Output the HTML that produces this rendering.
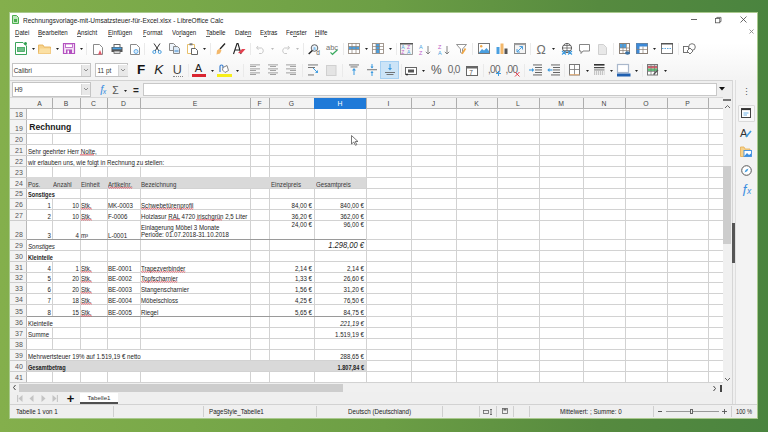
<!DOCTYPE html><html><head><meta charset="utf-8"><style>
html,body{margin:0;padding:0;}
body{width:768px;height:432px;overflow:hidden;position:relative;font-family:"Liberation Sans", sans-serif;
background:linear-gradient(90deg,#84af4c 0%,#78a849 25%,#6c9e45 50%,#568a3f 78%,#4a843f 100%);}
div{position:absolute;box-sizing:border-box;}
.t{white-space:pre;line-height:1;color:#333;}
svg{position:absolute;overflow:visible;}
</style></head><body><div style="left:9px;top:12px;width:749px;height:407px;background:#a9c98e;"></div><div style="left:10px;top:13px;width:747px;height:405px;background:linear-gradient(#ffffff 0px,#ffffff 30px,#f4f4f4 66px,#efefef 100%);"></div><svg style="left:12px;top:15px" width="7" height="9" viewBox="0 0 7 9"><path d="M0.5 0.5H4.5L6.5 2.5V8.5H0.5Z" fill="#bfe6bf" stroke="#4caf50" stroke-width="1"/><rect x="2" y="4" width="3" height="3" fill="#4caf50"/></svg><div class="t" style="left:22.6px;top:16.77px;font-size:7px;color:#222;transform:scaleX(0.93);transform-origin:0 0;">Rechnungsvorlage-mit-Umsatzsteuer-für-Excel.xlsx - LibreOffice Calc</div><div style="left:690.5px;top:19px;width:6.5px;height:0.8px;background:#666;"></div><svg style="left:715px;top:16.5px" width="7" height="6" viewBox="0 0 7 6"><rect x="0.4" y="1.4" width="4.4" height="4.4" fill="none" stroke="#555" stroke-width="0.8"/><path d="M1.8 1.4V0.4H6V4.6H4.8" fill="none" stroke="#555" stroke-width="0.8"/></svg><svg style="left:740px;top:16px" width="7" height="7" viewBox="0 0 7 7"><path d="M0.5 0.5L6.5 6.5M6.5 0.5L0.5 6.5" stroke="#444" stroke-width="0.8"/></svg><svg style="left:749px;top:29px" width="5" height="5" viewBox="0 0 5 5"><path d="M0.5 0.5L4.5 4.5M4.5 0.5L0.5 4.5" stroke="#888" stroke-width="0.9"/></svg><div class="t" style="left:15px;top:29.74px;font-size:6.7px;color:#1a1a1a;transform:scaleX(0.92);transform-origin:0 0;">Datei</div><div class="t" style="left:37.5px;top:29.74px;font-size:6.7px;color:#1a1a1a;transform:scaleX(0.92);transform-origin:0 0;">Bearbeiten</div><div class="t" style="left:77px;top:29.74px;font-size:6.7px;color:#1a1a1a;transform:scaleX(0.92);transform-origin:0 0;">Ansicht</div><div class="t" style="left:108px;top:29.74px;font-size:6.7px;color:#1a1a1a;transform:scaleX(0.92);transform-origin:0 0;">Einfügen</div><div class="t" style="left:142.5px;top:29.74px;font-size:6.7px;color:#1a1a1a;transform:scaleX(0.92);transform-origin:0 0;">Format</div><div class="t" style="left:171.5px;top:29.74px;font-size:6.7px;color:#1a1a1a;transform:scaleX(0.92);transform-origin:0 0;">Vorlagen</div><div class="t" style="left:206px;top:29.74px;font-size:6.7px;color:#1a1a1a;transform:scaleX(0.92);transform-origin:0 0;">Tabelle</div><div class="t" style="left:234.5px;top:29.74px;font-size:6.7px;color:#1a1a1a;transform:scaleX(0.92);transform-origin:0 0;">Daten</div><div class="t" style="left:260px;top:29.74px;font-size:6.7px;color:#1a1a1a;transform:scaleX(0.92);transform-origin:0 0;">Extras</div><div class="t" style="left:286px;top:29.74px;font-size:6.7px;color:#1a1a1a;transform:scaleX(0.92);transform-origin:0 0;">Fenster</div><div class="t" style="left:315px;top:29.74px;font-size:6.7px;color:#1a1a1a;transform:scaleX(0.92);transform-origin:0 0;">Hilfe</div><div style="left:15.0px;top:36.2px;width:4.416px;height:0.6px;background:#666;"></div><div style="left:37.5px;top:36.2px;width:4.140000000000001px;height:0.6px;background:#666;"></div><div style="left:77.0px;top:36.2px;width:4.140000000000001px;height:0.6px;background:#666;"></div><div style="left:108.0px;top:36.2px;width:4.140000000000001px;height:0.6px;background:#666;"></div><div style="left:142.5px;top:36.2px;width:3.772px;height:0.6px;background:#666;"></div><div style="left:178.676px;top:36.2px;width:2.0240000000000005px;height:0.6px;background:#666;"></div><div style="left:206.0px;top:36.2px;width:3.772px;height:0.6px;background:#666;"></div><div style="left:247.472px;top:36.2px;width:3.4040000000000004px;height:0.6px;background:#666;"></div><div style="left:264.14px;top:36.2px;width:3.036px;height:0.6px;background:#666;"></div><div style="left:293.176px;top:36.2px;width:3.4040000000000004px;height:0.6px;background:#666;"></div><div style="left:315.0px;top:36.2px;width:4.416px;height:0.6px;background:#666;"></div><svg style="left:15px;top:42px" width="12" height="13" viewBox="0 0 12 13"><path d="M0.5 0.5H8L11.5 4V12.5H0.5Z" fill="#fff" stroke="#3aa35a"/><rect x="2.5" y="5.5" width="7" height="4" fill="#6fc187" stroke="#3aa35a" stroke-width="0.8"/><circle cx="10.5" cy="1.5" r="1.5" fill="#2e9e4e"/></svg><svg style="left:31.5px;top:48px" width="3" height="2" viewBox="0 0 3 2"><path d="M0 0H3L1.5 2Z" fill="#222"/></svg><svg style="left:38px;top:44px" width="13" height="10" viewBox="0 0 13 10"><path d="M0.5 1V9.5H12.5V3H6L5 1Z" fill="#f6d28b" stroke="#e8b35b" stroke-width="0.9"/><path d="M0.5 9.5L2 4.5H12.5V9.5Z" fill="#fbe0a4"/></svg><svg style="left:55.5px;top:48px" width="3" height="2" viewBox="0 0 3 2"><path d="M0 0H3L1.5 2Z" fill="#222"/></svg><svg style="left:62.5px;top:43px" width="12" height="11" viewBox="0 0 12 11"><path d="M0.5 0.5H11.5V10.5H0.5Z" fill="#f5e4f7" stroke="#b452c0" stroke-width="1.2"/><rect x="2.5" y="1" width="7" height="3.5" fill="#fff" stroke="#b452c0" stroke-width="0.8"/><rect x="3" y="6.5" width="6" height="4" fill="#b452c0"/><rect x="4.5" y="7.5" width="1.5" height="3" fill="#fff"/></svg><svg style="left:79.5px;top:48px" width="3" height="2" viewBox="0 0 3 2"><path d="M0 0H3L1.5 2Z" fill="#222"/></svg><div style="left:86px;top:43px;width:1px;height:12px;background:#eaeaea;"></div><svg style="left:93px;top:44px" width="10" height="11" viewBox="0 0 10 11"><path d="M0.5 0.5H6.5L9.5 3.5V10.5H0.5Z" fill="#fff" stroke="#8a8a8a"/><path d="M5 10.5L7 6L9 10.5Z" fill="#e35b6b"/></svg><svg style="left:110.5px;top:44px" width="12" height="10" viewBox="0 0 12 10"><rect x="3" y="0.5" width="6" height="3" fill="#fff" stroke="#666"/><rect x="0.5" y="3" width="11" height="5" fill="#555"/><rect x="1.5" y="3.5" width="9" height="1.8" fill="#4a9fe0"/><rect x="3" y="7" width="6" height="2.5" fill="#ddd" stroke="#666" stroke-width="0.8"/></svg><svg style="left:130px;top:44px" width="10" height="11" viewBox="0 0 10 11"><path d="M0.5 0.5H6.5L9.5 3.5V10.5H0.5Z" fill="#fff" stroke="#8a8a8a"/><circle cx="6" cy="7.5" r="2" fill="#d8ebfa" stroke="#5aa6e6" stroke-width="0.9"/></svg><div style="left:144px;top:43px;width:1px;height:12px;background:#eaeaea;"></div><svg style="left:152px;top:43px" width="10" height="11" viewBox="0 0 10 11"><path d="M2 0.5L7 8M8 0.5L3 8" stroke="#333" stroke-width="1"/><circle cx="2.3" cy="9" r="1.5" fill="none" stroke="#4a9fe0" stroke-width="1"/><circle cx="7.7" cy="9" r="1.5" fill="none" stroke="#4a9fe0" stroke-width="1"/></svg><svg style="left:169px;top:43px" width="12" height="11" viewBox="0 0 12 11"><path d="M0.5 0.5H4.5L6.5 2.5V7.5H0.5Z" fill="#eef5fc" stroke="#888"/><path d="M4.5 3.5H8.5L10.5 5.5V10.5H4.5Z" fill="#dbeaf8" stroke="#888"/><rect x="5.5" y="7" width="4" height="2" fill="#8ab8e2"/></svg><svg style="left:187px;top:43px" width="12" height="12" viewBox="0 0 12 12"><path d="M0.5 1.5H7.5V10.5H0.5Z" fill="#fff" stroke="#e8c06a" stroke-width="1"/><rect x="2.5" y="0.3" width="3" height="2" fill="#777"/><path d="M4.5 5.5H8.5L10.5 7.5V11.5H4.5Z" fill="#fff" stroke="#666"/></svg><svg style="left:202.5px;top:48px" width="3" height="2" viewBox="0 0 3 2"><path d="M0 0H3L1.5 2Z" fill="#222"/></svg><div style="left:210px;top:43px;width:1px;height:12px;background:#eaeaea;"></div><svg style="left:216px;top:43px" width="10" height="12" viewBox="0 0 10 12"><path d="M9 0.5L4 6" stroke="#222" stroke-width="1.3"/><path d="M0.5 11.5L1 7.5L3.5 5.5L5.5 7.5L4 10.5Z" fill="#f3b86b"/></svg><svg style="left:233px;top:43px" width="13" height="12" viewBox="0 0 13 12"><path d="M0.5 11L4 0.5H5L8 11M2 7H6.5" fill="none" stroke="#222" stroke-width="1.1"/><path d="M5 10L9 6H12.5L8.5 10.5Z" fill="#e4404f"/></svg><div style="left:250px;top:43px;width:1px;height:12px;background:#eaeaea;"></div><svg style="left:255.5px;top:45px" width="9" height="9" viewBox="0 0 9 9"><path d="M2 1L0.5 3L2.5 4.5M0.8 3H5.5A3 3 0 0 1 5.5 8.5H3" fill="none" stroke="#c8c8c8" stroke-width="1"/></svg><svg style="left:271.0px;top:48px" width="3" height="2" viewBox="0 0 3 2"><path d="M0 0H3L1.5 2Z" fill="#bbb"/></svg><svg style="left:279.5px;top:45px" width="10" height="9" viewBox="0 0 10 9"><path d="M8 1L9.5 3L7.5 4.5M9.2 3H4.5A3 3 0 0 0 4.5 8.5H7" fill="none" stroke="#c8c8c8" stroke-width="1"/></svg><svg style="left:295.5px;top:48px" width="3" height="2" viewBox="0 0 3 2"><path d="M0 0H3L1.5 2Z" fill="#bbb"/></svg><div style="left:302.5px;top:43px;width:1px;height:12px;background:#eaeaea;"></div><svg style="left:308px;top:43.5px" width="13" height="11" viewBox="0 0 13 11"><circle cx="6.5" cy="4" r="3.3" fill="#eaf3fb" stroke="#555" stroke-width="0.9"/><path d="M4.3 6.5L0.7 10" stroke="#222" stroke-width="1.4"/><text x="5" y="5.5" font-size="4.5" fill="#4a9fe0" font-family="Liberation Sans">a</text><text x="8.3" y="11" font-size="6.5" fill="#555" font-family="Liberation Sans">d</text></svg><svg style="left:326px;top:43.5px" width="13" height="11" viewBox="0 0 13 11"><text x="0" y="6" font-size="7.2" fill="#707070" font-family="Liberation Sans" textLength="12" lengthAdjust="spacingAndGlyphs">abc</text><path d="M4.5 8.3L6.5 10.3L11.5 5.8" fill="none" stroke="#3aaa60" stroke-width="1.2"/></svg><div style="left:342.5px;top:43px;width:1px;height:12px;background:#eaeaea;"></div><svg style="left:348px;top:43px" width="12" height="11" viewBox="0 0 12 11"><rect x="0.5" y="0.5" width="11" height="10" fill="#fff" stroke="#9a8f85" stroke-width="0.9"/><rect x="1" y="3.5" width="10" height="3" fill="#4a9fe0"/><path d="M0.5 3.5H11.5M0.5 6.5H11.5M4 0.5V10.5M8 0.5V10.5" stroke="#8a7f75" stroke-width="0.7"/></svg><svg style="left:364.5px;top:48px" width="3" height="2" viewBox="0 0 3 2"><path d="M0 0H3L1.5 2Z" fill="#222"/></svg><svg style="left:372px;top:43px" width="12" height="11" viewBox="0 0 12 11"><rect x="0.5" y="0.5" width="11" height="10" fill="#fff" stroke="#9a8f85" stroke-width="0.9"/><rect x="4" y="1" width="3.5" height="9" fill="#4a9fe0"/><path d="M0.5 3.5H11.5M0.5 6.5H11.5M4 0.5V10.5M7.5 0.5V10.5" stroke="#8a7f75" stroke-width="0.7"/></svg><svg style="left:388.5px;top:48px" width="3" height="2" viewBox="0 0 3 2"><path d="M0 0H3L1.5 2Z" fill="#222"/></svg><div style="left:395.5px;top:43px;width:1px;height:12px;background:#eaeaea;"></div><svg style="left:400px;top:43px" width="13" height="12" viewBox="0 0 13 12"><rect x="0.5" y="1" width="12" height="10.5" fill="#f4f4f4" stroke="#888" stroke-width="0.8"/><rect x="0" y="0" width="13" height="1.3" fill="#555"/><text x="1.3" y="6" font-size="5" fill="#4a9fe0" font-family="Liberation Sans">A</text><text x="1.3" y="11" font-size="5" fill="#c05ec8" font-family="Liberation Sans">Z</text><text x="7" y="6" font-size="5" fill="#c05ec8" font-family="Liberation Sans">Z</text><text x="7" y="11" font-size="5" fill="#4a9fe0" font-family="Liberation Sans">A</text></svg><svg style="left:419px;top:43px" width="13" height="12" viewBox="0 0 13 12"><text x="0" y="5.5" font-size="5.5" fill="#4a9fe0" font-family="Liberation Sans">A</text><text x="0" y="11.5" font-size="5.5" fill="#c05ec8" font-family="Liberation Sans">Z</text><path d="M9 3V11M6.8 8.8L9 11L11.2 8.8" fill="none" stroke="#777" stroke-width="0.9"/></svg><svg style="left:437.5px;top:43px" width="13" height="12" viewBox="0 0 13 12"><text x="0" y="5.5" font-size="5.5" fill="#c05ec8" font-family="Liberation Sans">Z</text><text x="0" y="11.5" font-size="5.5" fill="#4a9fe0" font-family="Liberation Sans">A</text><path d="M9 3V11M6.8 8.8L9 11L11.2 8.8" fill="none" stroke="#777" stroke-width="0.9"/></svg><svg style="left:456px;top:43.5px" width="11" height="10" viewBox="0 0 11 10"><path d="M0.5 0.5H10.5L6.5 5V9.5L4.5 8.5V5Z" fill="#fff" stroke="#888" stroke-width="0.9"/><path d="M6 9.8L9.5 4.5" stroke="#f0a848" stroke-width="1.8"/></svg><div style="left:472px;top:43px;width:1px;height:12px;background:#eaeaea;"></div><svg style="left:478px;top:43px" width="12" height="11" viewBox="0 0 12 11"><rect x="0.5" y="0.5" width="11" height="10" fill="#fff" stroke="#777"/><circle cx="3.2" cy="3.2" r="1.2" fill="#f0a848"/><path d="M1 9.5L4 6L6 7.5L8.5 5L11 8V10H1Z" fill="#4a9fe0"/></svg><svg style="left:495.5px;top:43px" width="12" height="11" viewBox="0 0 12 11"><rect x="0.5" y="4" width="3" height="7" fill="#4a9fe0"/><rect x="4.5" y="0.5" width="3" height="10.5" fill="#f3b86b"/><rect x="8.5" y="5.5" width="3" height="5.5" fill="#555"/></svg><svg style="left:514px;top:43px" width="12" height="11" viewBox="0 0 12 11"><rect x="0.5" y="0.5" width="11" height="10" fill="#f4f4f4" stroke="#8c8c8c"/><rect x="0.5" y="0.5" width="11" height="1.6" fill="#a0a0a0"/><path d="M3 9L8.5 3.5M3 6V9H6M8.5 6.5V3.5H5.5" fill="none" stroke="#4a9fe0" stroke-width="1"/></svg><div style="left:530px;top:43px;width:1px;height:12px;background:#eaeaea;"></div><div class="t" style="left:531.2px;top:42.53px;width:20px;text-align:center;font-size:13px;transform:scaleX(0.95);transform-origin:50% 0;color:#707070;">Ω</div><svg style="left:552.0px;top:48px" width="3" height="2" viewBox="0 0 3 2"><path d="M0 0H3L1.5 2Z" fill="#222"/></svg><svg style="left:561px;top:43px" width="12" height="12" viewBox="0 0 12 12"><circle cx="6" cy="5" r="4.5" fill="#fff" stroke="#555" stroke-width="1"/><path d="M1.5 5H10.5M6 0.5V9.5M3 2.5H9M3 7.5H9" stroke="#555" stroke-width="0.7"/><path d="M1 8L5 11.5M11 8L7 11.5M1 11.5L5 8M11 11.5L7 8" stroke="#3a9ae0" stroke-width="1.1"/></svg><svg style="left:579px;top:43.5px" width="11" height="10" viewBox="0 0 11 10"><path d="M0.5 0.5H10.5V7H4L2 9.5V7H0.5Z" fill="#fff" stroke="#777" stroke-width="0.9"/></svg><svg style="left:598px;top:43.5px" width="9" height="11" viewBox="0 0 9 11"><path d="M0.5 0.5H5.5L8.5 3.5V10.5H0.5Z" fill="#e8e8e8" stroke="#d0d0d0"/></svg><div style="left:613px;top:43px;width:1px;height:12px;background:#eaeaea;"></div><svg style="left:619px;top:43px" width="12" height="12" viewBox="0 0 12 12"><rect x="0.5" y="0.5" width="10" height="10" fill="#fff" stroke="#8a7f75"/><rect x="1" y="1" width="6" height="4" fill="#4a9fe0"/><path d="M0.5 5H10.5M4 0.5V10.5M7.5 0.5V10.5M0.5 7.5H10.5" stroke="#8a7f75" stroke-width="0.7"/><ellipse cx="8.5" cy="10" rx="2.5" ry="1.8" fill="#3a6fa0"/></svg><svg style="left:636px;top:43px" width="12" height="11" viewBox="0 0 12 11"><rect x="0.5" y="0.5" width="11" height="10" fill="#fff" stroke="#8a7f75"/><rect x="0.5" y="0.5" width="11" height="3" fill="#3d8ad8"/><rect x="0.5" y="0.5" width="3" height="10" fill="#3d8ad8"/><path d="M0.5 6.5H11.5M7 3.5V10.5" stroke="#8a7f75" stroke-width="0.7"/></svg><svg style="left:652.5px;top:48px" width="3" height="2" viewBox="0 0 3 2"><path d="M0 0H3L1.5 2Z" fill="#222"/></svg><svg style="left:661px;top:43px" width="12" height="11" viewBox="0 0 12 11"><rect x="0.5" y="0.5" width="11" height="10" fill="#fff" stroke="#777"/><rect x="0" y="0" width="12" height="1.5" fill="#555"/><path d="M1 5.5H11" stroke="#4a9fe0" stroke-width="0.9" stroke-dasharray="1.5 1"/></svg><div style="left:678px;top:43px;width:1px;height:12px;background:#eaeaea;"></div><svg style="left:683px;top:42.5px" width="13" height="11" viewBox="0 0 13 11"><rect x="0.5" y="3.5" width="5" height="6" fill="#fff" stroke="#666" stroke-width="0.9"/><circle cx="9" cy="4" r="3.3" fill="#fff" stroke="#666" stroke-width="0.9"/><path d="M7 5L10 8L7 11L4 8Z" fill="#fff" stroke="#666" stroke-width="0.9"/></svg><div style="left:12px;top:63px;width:79px;height:14px;background:#fff;border:1px solid #c4c4c4;"></div><div style="left:81px;top:64.5px;width:9px;height:11.5px;background:#e8e8e8;border-left:1px solid #d4d4d4;"></div><svg style="left:83.5px;top:69px" width="4" height="3" viewBox="0 0 4 3"><path d="M0 0L2 2L4 0" fill="none" stroke="#777" stroke-width="0.8"/></svg><div class="t" style="left:13.75px;top:67.81px;font-size:6.4px;color:#333;">Calibri</div><div style="left:95px;top:63px;width:33px;height:14px;background:#fff;border:1px solid #c4c4c4;"></div><div style="left:118px;top:64.5px;width:9.5px;height:11.5px;background:#e8e8e8;border-left:1px solid #d4d4d4;"></div><svg style="left:121px;top:69px" width="4" height="3" viewBox="0 0 4 3"><path d="M0 0L2 2L4 0" fill="none" stroke="#777" stroke-width="0.8"/></svg><div class="t" style="left:97.5px;top:67.81px;font-size:6.4px;color:#333;">11 pt</div><div class="t" style="left:131.0px;top:63.38px;width:20px;text-align:center;font-size:13.5px;color:#111;font-weight:bold;">F</div><div class="t" style="left:148.8px;top:63.38px;width:20px;text-align:center;font-size:13.5px;color:#222;font-style:italic;">K</div><div class="t" style="left:167.3px;top:63.69px;width:20px;text-align:center;font-size:12.5px;color:#444;">U</div><div style="left:172.5px;top:75.5px;width:10px;height:1px;border-top:1px dotted #888;"></div><div style="left:188px;top:64px;width:1px;height:13px;background:#eaeaea;"></div><div class="t" style="left:188.5px;top:62.75px;width:20px;text-align:center;font-size:11px;color:#222;">A</div><div style="left:192px;top:74px;width:14px;height:2.7px;background:#d9242f;"></div><svg style="left:211.0px;top:69.5px" width="3" height="2" viewBox="0 0 3 2"><path d="M0 0H3L1.5 2Z" fill="#222"/></svg><svg style="left:218.5px;top:63.5px" width="10" height="9" viewBox="0 0 10 9"><path d="M1 8V2.5A1.5 1.5 0 0 1 4 2.5V4" fill="none" stroke="#3a7fd0" stroke-width="1.2"/><path d="M4 3.5L8 1.5L9.5 6.5L6 8.5L3.5 6Z" fill="#fff" stroke="#777" stroke-width="0.9"/></svg><div style="left:217px;top:74px;width:15px;height:2.9px;background:#f7ee1a;"></div><svg style="left:236.0px;top:69.5px" width="3" height="2" viewBox="0 0 3 2"><path d="M0 0H3L1.5 2Z" fill="#222"/></svg><div style="left:242.5px;top:64px;width:1px;height:13px;background:#eaeaea;"></div><svg style="left:249.5px;top:64.2px" width="12" height="12" viewBox="0 0 12 12"><rect x="0" y="0.5" width="10" height="0.8" fill="#8c8c8c"/><rect x="0" y="2.2" width="6" height="0.8" fill="#8c8c8c"/><rect x="0" y="4.5" width="10" height="0.8" fill="#8c8c8c"/><rect x="0" y="6.2" width="6" height="0.8" fill="#8c8c8c"/><rect x="0" y="8.5" width="10" height="0.8" fill="#8c8c8c"/><rect x="0" y="10.2" width="6" height="0.8" fill="#8c8c8c"/></svg><svg style="left:267.5px;top:64.2px" width="12" height="12" viewBox="0 0 12 12"><rect x="0" y="0.5" width="10" height="0.8" fill="#8c8c8c"/><rect x="2" y="2.2" width="6" height="0.8" fill="#8c8c8c"/><rect x="0" y="4.5" width="10" height="0.8" fill="#8c8c8c"/><rect x="2" y="6.2" width="6" height="0.8" fill="#8c8c8c"/><rect x="0" y="8.5" width="10" height="0.8" fill="#8c8c8c"/><rect x="2" y="10.2" width="6" height="0.8" fill="#8c8c8c"/></svg><svg style="left:286px;top:64.2px" width="12" height="12" viewBox="0 0 12 12"><rect x="0" y="0.5" width="10" height="0.8" fill="#8c8c8c"/><rect x="4" y="2.2" width="6" height="0.8" fill="#8c8c8c"/><rect x="0" y="4.5" width="10" height="0.8" fill="#8c8c8c"/><rect x="4" y="6.2" width="6" height="0.8" fill="#8c8c8c"/><rect x="0" y="8.5" width="10" height="0.8" fill="#8c8c8c"/><rect x="4" y="10.2" width="6" height="0.8" fill="#8c8c8c"/></svg><div style="left:302px;top:64px;width:1px;height:13px;background:#eaeaea;"></div><svg style="left:308px;top:64.2px" width="11" height="12" viewBox="0 0 11 12"><rect x="0" y="0.5" width="10" height="0.9" fill="#666"/><rect x="0" y="3" width="7" height="0.9" fill="#666"/><rect x="0" y="10.5" width="6" height="0.9" fill="#666"/><path d="M5 4L9 8" stroke="#3a9ae0" stroke-width="1"/><path d="M7 8.8L10 9L9.8 6Z" fill="#3a9ae0"/></svg><svg style="left:325.5px;top:64.5px" width="10.5" height="11" viewBox="0 0 10.5 11"><rect x="0.5" y="0.5" width="9.5" height="10" fill="#e4e4e4" stroke="#d0d0d0"/></svg><div style="left:342px;top:64px;width:1px;height:13px;background:#eaeaea;"></div><svg style="left:348.5px;top:64.2px" width="10" height="12" viewBox="0 0 10 12"><rect x="0" y="0.5" width="10" height="0.9" fill="#666"/><rect x="1.5" y="2.5" width="7" height="0.9" fill="#666"/><path d="M5 11V5" stroke="#3a9ae0" stroke-width="1"/><path d="M3 6.5L5 4L7 6.5Z" fill="#3a9ae0"/></svg><svg style="left:366.5px;top:64.2px" width="10" height="12" viewBox="0 0 10 12"><rect x="0" y="5.3" width="10" height="0.9" fill="#666"/><path d="M5 0V4M5 12V7.5" stroke="#3a9ae0" stroke-width="1"/><path d="M3.5 2.5L5 4.5L6.5 2.5ZM3.5 9L5 7L6.5 9Z" fill="#3a9ae0"/></svg><div style="left:380px;top:60.5px;width:19px;height:18.5px;background:#cce4f7;border:1px solid #a6d0f2;"></div><svg style="left:384.5px;top:64.2px" width="10" height="12" viewBox="0 0 10 12"><path d="M5 0V5" stroke="#3a9ae0" stroke-width="1"/><path d="M3 4L5 6.5L7 4Z" fill="#3a9ae0"/><rect x="0" y="8" width="10" height="0.9" fill="#666"/><rect x="1.5" y="10" width="7" height="0.9" fill="#666"/></svg><div style="left:401px;top:64px;width:1px;height:13px;background:#eaeaea;"></div><svg style="left:405px;top:66.5px" width="12" height="9" viewBox="0 0 12 9"><rect x="0.5" y="0.5" width="11" height="7" fill="#fff" stroke="#555" stroke-width="0.9"/><rect x="3" y="2.5" width="6" height="3" fill="#555"/><circle cx="2" cy="7.5" r="0.9" fill="#222"/></svg><svg style="left:422.0px;top:69.5px" width="3" height="2" viewBox="0 0 3 2"><path d="M0 0H3L1.5 2Z" fill="#222"/></svg><div class="t" style="left:426.4px;top:64.04px;width:20px;text-align:center;font-size:12px;color:#555;">%</div><div class="t" style="left:438.8px;top:65.45px;width:30px;text-align:center;font-size:10px;color:#666;letter-spacing:-0.6px;">0,0</div><svg style="left:466px;top:64.5px" width="12" height="11" viewBox="0 0 12 11"><rect x="0.5" y="1.5" width="11" height="9" fill="#fff" stroke="#666"/><rect x="0.5" y="1.5" width="11" height="2" fill="#666"/><text x="3.3" y="9.5" font-size="6.5" fill="#555" font-family="Liberation Sans">7</text></svg><div style="left:482.5px;top:64px;width:1px;height:13px;background:#eaeaea;"></div><div class="t" style="left:479.0px;top:65.45px;width:30px;text-align:center;font-size:10px;color:#666;letter-spacing:-0.6px;">,00</div><svg style="left:495.5px;top:71px" width="5" height="5" viewBox="0 0 5 5"><path d="M2.5 0V5M0 2.5H5" stroke="#3a9ae0" stroke-width="1"/></svg><div class="t" style="left:496.5px;top:65.45px;width:30px;text-align:center;font-size:10px;color:#666;letter-spacing:-0.6px;">,00</div><svg style="left:515px;top:71.5px" width="4.5" height="4.5" viewBox="0 0 4.5 4.5"><path d="M0 0L4.5 4.5M4.5 0L0 4.5" stroke="#e0404f" stroke-width="1"/></svg><div style="left:523.5px;top:64px;width:1px;height:13px;background:#eaeaea;"></div><svg style="left:529px;top:64.2px" width="13" height="12" viewBox="0 0 13 12"><rect x="4" y="0.5" width="9" height="0.9" fill="#555"/><rect x="6" y="3" width="7" height="0.9" fill="#555"/><rect x="6" y="5.5" width="7" height="0.9" fill="#555"/><rect x="6" y="8" width="7" height="0.9" fill="#555"/><rect x="4" y="10.5" width="9" height="0.9" fill="#555"/><path d="M0 6H4" stroke="#3a9ae0" stroke-width="1.1"/><path d="M3 4L5.2 6L3 8Z" fill="#3a9ae0"/></svg><svg style="left:546.5px;top:64.2px" width="13" height="12" viewBox="0 0 13 12"><rect x="4" y="0.5" width="9" height="0.9" fill="#555"/><rect x="6" y="3" width="7" height="0.9" fill="#555"/><rect x="6" y="5.5" width="7" height="0.9" fill="#555"/><rect x="6" y="8" width="7" height="0.9" fill="#555"/><rect x="4" y="10.5" width="9" height="0.9" fill="#555"/><path d="M1.5 6H5.5" stroke="#3a9ae0" stroke-width="1.1"/><path d="M2.5 4L0.3 6L2.5 8Z" fill="#3a9ae0"/></svg><div style="left:564px;top:64px;width:1px;height:13px;background:#eaeaea;"></div><svg style="left:569px;top:64.2px" width="11" height="11.5" viewBox="0 0 11 11.5"><rect x="0.5" y="0.5" width="10" height="10.5" fill="#fff" stroke="#777"/><path d="M5.5 0.5V11M0.5 5.5H10.5" stroke="#777" stroke-width="0.8"/><rect x="0.5" y="10.3" width="10" height="0.9" fill="#f0b070"/></svg><svg style="left:585.5px;top:69.5px" width="3" height="2" viewBox="0 0 3 2"><path d="M0 0H3L1.5 2Z" fill="#222"/></svg><svg style="left:593.5px;top:64.2px" width="11" height="11.5" viewBox="0 0 11 11.5"><rect x="0" y="0" width="10.5" height="1.6" fill="#333"/><rect x="0" y="3" width="10.5" height="1.2" fill="#444"/><rect x="0" y="5.5" width="10.5" height="0.9" fill="#666"/><path d="M0 8H10.5M0 10H10.5" stroke="#888" stroke-width="0.9" stroke-dasharray="1.2 0.8"/></svg><svg style="left:609.5px;top:69.5px" width="3" height="2" viewBox="0 0 3 2"><path d="M0 0H3L1.5 2Z" fill="#222"/></svg><svg style="left:616.5px;top:64.2px" width="14" height="13" viewBox="0 0 14 13"><rect x="0.5" y="0.5" width="11" height="8" fill="#fff" stroke="#aab8cc" stroke-width="1.2"/><rect x="0" y="9.5" width="13.5" height="3" fill="#1f5fb0"/></svg><svg style="left:635.0px;top:69.5px" width="3" height="2" viewBox="0 0 3 2"><path d="M0 0H3L1.5 2Z" fill="#222"/></svg><div style="left:642px;top:64px;width:1px;height:13px;background:#eaeaea;"></div><svg style="left:646.5px;top:64.2px" width="12" height="11.5" viewBox="0 0 12 11.5"><rect x="0.5" y="0.5" width="10" height="10.5" fill="#fff" stroke="#777"/><rect x="1" y="2" width="9" height="2.5" fill="#e35b6b"/><rect x="1" y="4.5" width="9" height="2.5" fill="#5cc077"/><path d="M0.5 2H10.5M4 0.5V11M7.5 0.5V11M0.5 7.5H10.5" stroke="#777" stroke-width="0.7"/><path d="M6.5 10.5L11 6" stroke="#555" stroke-width="1.3"/></svg><svg style="left:663.5px;top:69.5px" width="3" height="2" viewBox="0 0 3 2"><path d="M0 0H3L1.5 2Z" fill="#222"/></svg><div style="left:10px;top:79.5px;width:722px;height:1px;background:#d2d2d2;"></div><div style="left:10px;top:80.5px;width:722px;height:17.5px;background:#efefef;"></div><div style="left:12px;top:82px;width:79px;height:14.5px;background:#fff;border:1px solid #c4c4c4;"></div><div style="left:81px;top:83.5px;width:9px;height:11.5px;background:#e8e8e8;border-left:1px solid #d4d4d4;"></div><svg style="left:83.5px;top:88px" width="4" height="3" viewBox="0 0 4 3"><path d="M0 0L2 2L4 0" fill="none" stroke="#777" stroke-width="0.8"/></svg><div class="t" style="left:14.5px;top:86.71px;font-size:6.4px;color:#333;">H9</div><div class="t" style="left:91.8px;top:83.55px;width:20px;text-align:center;font-size:11px;color:#3a8ee0;font-style:italic;">ƒ</div><div class="t" style="left:94.5px;top:87.67px;width:20px;text-align:center;font-size:7px;color:#3a8ee0;font-style:italic;">x</div><div class="t" style="left:105.5px;top:84.50px;width:20px;text-align:center;font-size:10.5px;color:#555;">Σ</div><svg style="left:123.7px;top:89.5px" width="3" height="2" viewBox="0 0 3 2"><path d="M0 0H3L1.5 2Z" fill="#222"/></svg><div class="t" style="left:125.80000000000001px;top:85.75px;width:20px;text-align:center;font-size:10px;color:#222;font-weight:bold;">=</div><div style="left:142.5px;top:82.5px;width:574px;height:13.5px;background:#fff;border:1px solid #c8c8c8;"></div><svg style="left:719px;top:87px" width="6" height="3.5" viewBox="0 0 6 3.5"><path d="M0 0H6L3 3.5Z" fill="#111"/></svg><div style="left:10px;top:98px;width:713px;height:285px;background:#fff;"></div><div style="left:27px;top:177px;width:339px;height:11px;background:#d9d9d9;"></div><div style="left:27px;top:361px;width:339px;height:11px;background:#d9d9d9;"></div><div style="left:52px;top:108px;width:1px;height:275px;background:#d2d2d2;"></div><div style="left:80px;top:108px;width:1px;height:275px;background:#d2d2d2;"></div><div style="left:107px;top:108px;width:1px;height:275px;background:#d2d2d2;"></div><div style="left:140px;top:108px;width:1px;height:275px;background:#d2d2d2;"></div><div style="left:250px;top:108px;width:1px;height:275px;background:#d2d2d2;"></div><div style="left:269px;top:108px;width:1px;height:275px;background:#d2d2d2;"></div><div style="left:314px;top:108px;width:1px;height:275px;background:#d2d2d2;"></div><div style="left:366px;top:108px;width:1px;height:275px;background:#d2d2d2;"></div><div style="left:411px;top:108px;width:1px;height:275px;background:#d2d2d2;"></div><div style="left:456px;top:108px;width:1px;height:275px;background:#d2d2d2;"></div><div style="left:497px;top:108px;width:1px;height:275px;background:#d2d2d2;"></div><div style="left:539px;top:108px;width:1px;height:275px;background:#d2d2d2;"></div><div style="left:583px;top:108px;width:1px;height:275px;background:#d2d2d2;"></div><div style="left:625px;top:108px;width:1px;height:275px;background:#d2d2d2;"></div><div style="left:667px;top:108px;width:1px;height:275px;background:#d2d2d2;"></div><div style="left:708px;top:108px;width:1px;height:275px;background:#d2d2d2;"></div><div style="left:27px;top:119px;width:696px;height:1px;background:#d2d2d2;"></div><div style="left:27px;top:133px;width:696px;height:1px;background:#d2d2d2;"></div><div style="left:27px;top:144px;width:696px;height:1px;background:#d2d2d2;"></div><div style="left:27px;top:155px;width:696px;height:1px;background:#d2d2d2;"></div><div style="left:27px;top:166px;width:696px;height:1px;background:#d2d2d2;"></div><div style="left:27px;top:177px;width:696px;height:1px;background:#d2d2d2;"></div><div style="left:27px;top:188px;width:696px;height:1px;background:#d2d2d2;"></div><div style="left:27px;top:198px;width:696px;height:1px;background:#d2d2d2;"></div><div style="left:27px;top:209px;width:696px;height:1px;background:#d2d2d2;"></div><div style="left:27px;top:220px;width:696px;height:1px;background:#d2d2d2;"></div><div style="left:27px;top:239px;width:696px;height:1px;background:#d2d2d2;"></div><div style="left:27px;top:250px;width:696px;height:1px;background:#d2d2d2;"></div><div style="left:27px;top:261px;width:696px;height:1px;background:#d2d2d2;"></div><div style="left:27px;top:272px;width:696px;height:1px;background:#d2d2d2;"></div><div style="left:27px;top:282px;width:696px;height:1px;background:#d2d2d2;"></div><div style="left:27px;top:293px;width:696px;height:1px;background:#d2d2d2;"></div><div style="left:27px;top:304px;width:696px;height:1px;background:#d2d2d2;"></div><div style="left:27px;top:316px;width:696px;height:1px;background:#d2d2d2;"></div><div style="left:27px;top:327px;width:696px;height:1px;background:#d2d2d2;"></div><div style="left:27px;top:338px;width:696px;height:1px;background:#d2d2d2;"></div><div style="left:27px;top:349px;width:696px;height:1px;background:#d2d2d2;"></div><div style="left:27px;top:360px;width:696px;height:1px;background:#d2d2d2;"></div><div style="left:27px;top:371px;width:696px;height:1px;background:#d2d2d2;"></div><div style="left:27px;top:382px;width:696px;height:1px;background:#d2d2d2;"></div><div style="left:27px;top:177px;width:339px;height:11px;background:#d9d9d9;"></div><div style="left:27px;top:361px;width:339px;height:10px;background:#d9d9d9;"></div><div style="left:27px;top:239px;width:339px;height:1px;background:#9a9a9a;"></div><div style="left:27px;top:316px;width:339px;height:1px;background:#9a9a9a;"></div><div style="left:52px;top:120px;width:1px;height:13px;background:#fff;"></div><div style="left:52px;top:145px;width:1px;height:10px;background:#fff;"></div><div style="left:80px;top:145px;width:1px;height:10px;background:#fff;"></div><div style="left:52px;top:156px;width:1px;height:10px;background:#fff;"></div><div style="left:80px;top:156px;width:1px;height:10px;background:#fff;"></div><div style="left:107px;top:156px;width:1px;height:10px;background:#fff;"></div><div style="left:140px;top:156px;width:1px;height:10px;background:#fff;"></div><div style="left:52px;top:189px;width:1px;height:9px;background:#fff;"></div><div style="left:52px;top:240px;width:1px;height:10px;background:#fff;"></div><div style="left:52px;top:251px;width:1px;height:10px;background:#fff;"></div><div style="left:52px;top:317px;width:1px;height:10px;background:#fff;"></div><div style="left:52px;top:350px;width:1px;height:10px;background:#fff;"></div><div style="left:80px;top:350px;width:1px;height:10px;background:#fff;"></div><div style="left:107px;top:350px;width:1px;height:10px;background:#fff;"></div><div style="left:140px;top:350px;width:1px;height:10px;background:#fff;"></div><div style="left:10px;top:97px;width:713px;height:12px;background:#f3f3f3;border-bottom:1px solid #b5b5b5;border-top:1px solid #d8d8d8;"></div><div style="left:10px;top:109px;width:17px;height:274px;background:#f3f3f3;border-right:1px solid #b9b9b9;"></div><div style="left:52px;top:98px;width:1px;height:10px;background:#adadad;"></div><div style="left:80px;top:98px;width:1px;height:10px;background:#adadad;"></div><div style="left:107px;top:98px;width:1px;height:10px;background:#adadad;"></div><div style="left:140px;top:98px;width:1px;height:10px;background:#adadad;"></div><div style="left:250px;top:98px;width:1px;height:10px;background:#adadad;"></div><div style="left:269px;top:98px;width:1px;height:10px;background:#adadad;"></div><div style="left:314px;top:98px;width:1px;height:10px;background:#adadad;"></div><div style="left:366px;top:98px;width:1px;height:10px;background:#adadad;"></div><div style="left:411px;top:98px;width:1px;height:10px;background:#adadad;"></div><div style="left:456px;top:98px;width:1px;height:10px;background:#adadad;"></div><div style="left:497px;top:98px;width:1px;height:10px;background:#adadad;"></div><div style="left:539px;top:98px;width:1px;height:10px;background:#adadad;"></div><div style="left:583px;top:98px;width:1px;height:10px;background:#adadad;"></div><div style="left:625px;top:98px;width:1px;height:10px;background:#adadad;"></div><div style="left:667px;top:98px;width:1px;height:10px;background:#adadad;"></div><div style="left:708px;top:98px;width:1px;height:10px;background:#adadad;"></div><div style="left:10px;top:119px;width:17px;height:1px;background:#cdcdcd;"></div><div style="left:10px;top:133px;width:17px;height:1px;background:#cdcdcd;"></div><div style="left:10px;top:144px;width:17px;height:1px;background:#cdcdcd;"></div><div style="left:10px;top:155px;width:17px;height:1px;background:#cdcdcd;"></div><div style="left:10px;top:166px;width:17px;height:1px;background:#cdcdcd;"></div><div style="left:10px;top:177px;width:17px;height:1px;background:#cdcdcd;"></div><div style="left:10px;top:188px;width:17px;height:1px;background:#cdcdcd;"></div><div style="left:10px;top:198px;width:17px;height:1px;background:#cdcdcd;"></div><div style="left:10px;top:209px;width:17px;height:1px;background:#cdcdcd;"></div><div style="left:10px;top:220px;width:17px;height:1px;background:#cdcdcd;"></div><div style="left:10px;top:239px;width:17px;height:1px;background:#cdcdcd;"></div><div style="left:10px;top:250px;width:17px;height:1px;background:#cdcdcd;"></div><div style="left:10px;top:261px;width:17px;height:1px;background:#cdcdcd;"></div><div style="left:10px;top:272px;width:17px;height:1px;background:#cdcdcd;"></div><div style="left:10px;top:282px;width:17px;height:1px;background:#cdcdcd;"></div><div style="left:10px;top:293px;width:17px;height:1px;background:#cdcdcd;"></div><div style="left:10px;top:304px;width:17px;height:1px;background:#cdcdcd;"></div><div style="left:10px;top:316px;width:17px;height:1px;background:#cdcdcd;"></div><div style="left:10px;top:327px;width:17px;height:1px;background:#cdcdcd;"></div><div style="left:10px;top:338px;width:17px;height:1px;background:#cdcdcd;"></div><div style="left:10px;top:349px;width:17px;height:1px;background:#cdcdcd;"></div><div style="left:10px;top:360px;width:17px;height:1px;background:#cdcdcd;"></div><div style="left:10px;top:371px;width:17px;height:1px;background:#cdcdcd;"></div><div style="left:10px;top:382px;width:17px;height:1px;background:#cdcdcd;"></div><div class="t" style="left:19.5px;top:101.25px;width:40px;text-align:center;font-size:6.8px;color:#444;">A</div><div class="t" style="left:46.0px;top:101.25px;width:40px;text-align:center;font-size:6.8px;color:#444;">B</div><div class="t" style="left:73.5px;top:101.25px;width:40px;text-align:center;font-size:6.8px;color:#444;">C</div><div class="t" style="left:103.5px;top:101.25px;width:40px;text-align:center;font-size:6.8px;color:#444;">D</div><div class="t" style="left:175.0px;top:101.25px;width:40px;text-align:center;font-size:6.8px;color:#444;">E</div><div class="t" style="left:239.5px;top:101.25px;width:40px;text-align:center;font-size:6.8px;color:#444;">F</div><div class="t" style="left:271.5px;top:101.25px;width:40px;text-align:center;font-size:6.8px;color:#444;">G</div><div style="left:314px;top:98px;width:52px;height:11px;background:#1f7ad8;"></div><div class="t" style="left:320.0px;top:101.25px;width:40px;text-align:center;font-size:6.8px;color:#fff;">H</div><div class="t" style="left:368.5px;top:101.25px;width:40px;text-align:center;font-size:6.8px;color:#444;">I</div><div class="t" style="left:413.5px;top:101.25px;width:40px;text-align:center;font-size:6.8px;color:#444;">J</div><div class="t" style="left:456.5px;top:101.25px;width:40px;text-align:center;font-size:6.8px;color:#444;">K</div><div class="t" style="left:498.0px;top:101.25px;width:40px;text-align:center;font-size:6.8px;color:#444;">L</div><div class="t" style="left:541.0px;top:101.25px;width:40px;text-align:center;font-size:6.8px;color:#444;">M</div><div class="t" style="left:584.0px;top:101.25px;width:40px;text-align:center;font-size:6.8px;color:#444;">N</div><div class="t" style="left:626.0px;top:101.25px;width:40px;text-align:center;font-size:6.8px;color:#444;">O</div><div class="t" style="left:667.5px;top:101.25px;width:40px;text-align:center;font-size:6.8px;color:#444;">P</div><div class="t" style="left:4.0px;top:110.87px;width:30px;text-align:center;font-size:7px;color:#555;">18</div><div class="t" style="left:4.0px;top:124.86px;width:30px;text-align:center;font-size:7px;color:#555;">19</div><div class="t" style="left:4.0px;top:135.86px;width:30px;text-align:center;font-size:7px;color:#555;">20</div><div class="t" style="left:4.0px;top:146.86px;width:30px;text-align:center;font-size:7px;color:#555;">21</div><div class="t" style="left:4.0px;top:157.86px;width:30px;text-align:center;font-size:7px;color:#555;">22</div><div class="t" style="left:4.0px;top:168.86px;width:30px;text-align:center;font-size:7px;color:#555;">23</div><div class="t" style="left:4.0px;top:179.86px;width:30px;text-align:center;font-size:7px;color:#555;">24</div><div class="t" style="left:4.0px;top:189.86px;width:30px;text-align:center;font-size:7px;color:#555;">25</div><div class="t" style="left:4.0px;top:200.86px;width:30px;text-align:center;font-size:7px;color:#555;">26</div><div class="t" style="left:4.0px;top:211.86px;width:30px;text-align:center;font-size:7px;color:#555;">27</div><div class="t" style="left:4.0px;top:230.86px;width:30px;text-align:center;font-size:7px;color:#555;">28</div><div class="t" style="left:4.0px;top:241.86px;width:30px;text-align:center;font-size:7px;color:#555;">29</div><div class="t" style="left:4.0px;top:252.86px;width:30px;text-align:center;font-size:7px;color:#555;">30</div><div class="t" style="left:4.0px;top:263.87px;width:30px;text-align:center;font-size:7px;color:#555;">31</div><div class="t" style="left:4.0px;top:273.87px;width:30px;text-align:center;font-size:7px;color:#555;">32</div><div class="t" style="left:4.0px;top:284.87px;width:30px;text-align:center;font-size:7px;color:#555;">33</div><div class="t" style="left:4.0px;top:295.87px;width:30px;text-align:center;font-size:7px;color:#555;">34</div><div class="t" style="left:4.0px;top:307.87px;width:30px;text-align:center;font-size:7px;color:#555;">35</div><div class="t" style="left:4.0px;top:318.87px;width:30px;text-align:center;font-size:7px;color:#555;">36</div><div class="t" style="left:4.0px;top:329.87px;width:30px;text-align:center;font-size:7px;color:#555;">37</div><div class="t" style="left:4.0px;top:340.87px;width:30px;text-align:center;font-size:7px;color:#555;">38</div><div class="t" style="left:4.0px;top:351.87px;width:30px;text-align:center;font-size:7px;color:#555;">39</div><div class="t" style="left:4.0px;top:362.87px;width:30px;text-align:center;font-size:7px;color:#555;">40</div><div class="t" style="left:4.0px;top:373.87px;width:30px;text-align:center;font-size:7px;color:#555;">41</div><div class="t" style="left:29.2px;top:122.72px;font-size:8.6px;color:#1a1a1a;font-weight:bold;">Rechnung</div><div class="t" style="left:28.3px;top:147.66px;font-size:7.0px;transform:scaleX(0.875);transform-origin:0 0;color:#1c1c1c;">Sehr geehrter Herr Nolte,</div><div class="t" style="left:28.3px;top:158.66px;font-size:7.0px;transform:scaleX(0.875);transform-origin:0 0;color:#1c1c1c;">wir erlauben uns, wie folgt in Rechnung zu stellen:</div><div class="t" style="left:28.3px;top:180.66px;font-size:7.0px;transform:scaleX(0.875);transform-origin:0 0;color:#1c1c1c;color:#3a3a3a;">Pos.</div><div class="t" style="left:53.3px;top:180.66px;font-size:7.0px;transform:scaleX(0.875);transform-origin:0 0;color:#1c1c1c;color:#3a3a3a;">Anzahl</div><div class="t" style="left:81.3px;top:180.66px;font-size:7.0px;transform:scaleX(0.875);transform-origin:0 0;color:#1c1c1c;color:#3a3a3a;">Einheit</div><div class="t" style="left:108.3px;top:180.66px;font-size:7.0px;transform:scaleX(0.875);transform-origin:0 0;color:#1c1c1c;color:#3a3a3a;">Artikelnr.</div><div class="t" style="left:141.3px;top:180.66px;font-size:7.0px;transform:scaleX(0.875);transform-origin:0 0;color:#1c1c1c;color:#3a3a3a;">Bezeichnung</div><div class="t" style="left:270.8px;top:180.66px;font-size:7.0px;transform:scaleX(0.875);transform-origin:0 0;color:#1c1c1c;color:#3a3a3a;">Einzelpreis</div><div class="t" style="left:315.8px;top:180.66px;font-size:7.0px;transform:scaleX(0.875);transform-origin:0 0;color:#1c1c1c;color:#3a3a3a;">Gesamtpreis</div><div class="t" style="left:28.3px;top:190.66px;font-size:7.0px;transform:scaleX(0.875);transform-origin:0 0;color:#1c1c1c;font-weight:bold;transform:scaleX(0.8);">Sonstiges</div><div class="t" style="left:-249.3px;top:201.66px;width:300px;text-align:right;font-size:7.0px;transform:scaleX(0.875);transform-origin:100% 0;color:#1c1c1c;">1</div><div class="t" style="left:-221.3px;top:201.66px;width:300px;text-align:right;font-size:7.0px;transform:scaleX(0.875);transform-origin:100% 0;color:#1c1c1c;">10</div><div class="t" style="left:80.8px;top:201.66px;font-size:7.0px;transform:scaleX(0.875);transform-origin:0 0;color:#1c1c1c;">Stk.</div><div class="t" style="left:108.3px;top:201.66px;font-size:7.0px;transform:scaleX(0.875);transform-origin:0 0;color:#1c1c1c;">MK-0003</div><div class="t" style="left:141.3px;top:201.66px;font-size:7.0px;transform:scaleX(0.875);transform-origin:0 0;color:#1c1c1c;">Schwebetürenprofil</div><div class="t" style="left:11.5px;top:201.66px;width:300px;text-align:right;font-size:7.0px;transform:scaleX(0.875);transform-origin:100% 0;color:#1c1c1c;">84,00 €</div><div class="t" style="left:63.5px;top:201.66px;width:300px;text-align:right;font-size:7.0px;transform:scaleX(0.875);transform-origin:100% 0;color:#1c1c1c;">840,00 €</div><div class="t" style="left:-249.3px;top:212.66px;width:300px;text-align:right;font-size:7.0px;transform:scaleX(0.875);transform-origin:100% 0;color:#1c1c1c;">2</div><div class="t" style="left:-221.3px;top:212.66px;width:300px;text-align:right;font-size:7.0px;transform:scaleX(0.875);transform-origin:100% 0;color:#1c1c1c;">10</div><div class="t" style="left:80.8px;top:212.66px;font-size:7.0px;transform:scaleX(0.875);transform-origin:0 0;color:#1c1c1c;">Stk.</div><div class="t" style="left:108.3px;top:212.66px;font-size:7.0px;transform:scaleX(0.875);transform-origin:0 0;color:#1c1c1c;">F-0006</div><div class="t" style="left:141.3px;top:212.66px;font-size:7.0px;transform:scaleX(0.875);transform-origin:0 0;color:#1c1c1c;">Holzlasur RAL 4720 irischgrün 2,5 Liter</div><div class="t" style="left:11.5px;top:212.66px;width:300px;text-align:right;font-size:7.0px;transform:scaleX(0.875);transform-origin:100% 0;color:#1c1c1c;">36,20 €</div><div class="t" style="left:63.5px;top:212.66px;width:300px;text-align:right;font-size:7.0px;transform:scaleX(0.875);transform-origin:100% 0;color:#1c1c1c;">362,00 €</div><div class="t" style="left:-249.3px;top:231.66px;width:300px;text-align:right;font-size:7.0px;transform:scaleX(0.875);transform-origin:100% 0;color:#1c1c1c;">3</div><div class="t" style="left:-221.3px;top:231.66px;width:300px;text-align:right;font-size:7.0px;transform:scaleX(0.875);transform-origin:100% 0;color:#1c1c1c;">4</div><div class="t" style="left:80.8px;top:231.66px;font-size:7.0px;transform:scaleX(0.875);transform-origin:0 0;color:#1c1c1c;">m³</div><div class="t" style="left:108.3px;top:231.66px;font-size:7.0px;transform:scaleX(0.875);transform-origin:0 0;color:#1c1c1c;">L-0001</div><div class="t" style="left:141.3px;top:224.26px;font-size:7.0px;transform:scaleX(0.875);transform-origin:0 0;color:#1c1c1c;">Einlagerung Möbel 3 Monate</div><div class="t" style="left:141.3px;top:231.26px;font-size:7.0px;transform:scaleX(0.875);transform-origin:0 0;color:#1c1c1c;">Periode: 01.07.2018-31.10.2018</div><div class="t" style="left:11.5px;top:220.97px;width:300px;text-align:right;font-size:7.0px;transform:scaleX(0.875);transform-origin:100% 0;color:#1c1c1c;">24,00 €</div><div class="t" style="left:63.5px;top:220.97px;width:300px;text-align:right;font-size:7.0px;transform:scaleX(0.875);transform-origin:100% 0;color:#1c1c1c;">96,00 €</div><div class="t" style="left:28.3px;top:242.66px;font-size:7.0px;transform:scaleX(0.875);transform-origin:0 0;color:#1c1c1c;font-style:italic;">Sonstiges</div><div class="t" style="left:63.5px;top:241.29px;width:300px;text-align:right;font-size:8.633333333333335px;transform:scaleX(0.875);transform-origin:100% 0;color:#1c1c1c;font-style:italic;">1.298,00 €</div><div class="t" style="left:28.3px;top:253.66px;font-size:7.0px;transform:scaleX(0.875);transform-origin:0 0;color:#1c1c1c;font-weight:bold;transform:scaleX(0.8);">Kleinteile</div><div class="t" style="left:-249.3px;top:264.67px;width:300px;text-align:right;font-size:7.0px;transform:scaleX(0.875);transform-origin:100% 0;color:#1c1c1c;">4</div><div class="t" style="left:-221.3px;top:264.67px;width:300px;text-align:right;font-size:7.0px;transform:scaleX(0.875);transform-origin:100% 0;color:#1c1c1c;">1</div><div class="t" style="left:80.8px;top:264.67px;font-size:7.0px;transform:scaleX(0.875);transform-origin:0 0;color:#1c1c1c;">Stk.</div><div class="t" style="left:108.3px;top:264.67px;font-size:7.0px;transform:scaleX(0.875);transform-origin:0 0;color:#1c1c1c;">BE-0001</div><div class="t" style="left:141.3px;top:264.67px;font-size:7.0px;transform:scaleX(0.875);transform-origin:0 0;color:#1c1c1c;">Trapezverbinder</div><div class="t" style="left:11.5px;top:264.67px;width:300px;text-align:right;font-size:7.0px;transform:scaleX(0.875);transform-origin:100% 0;color:#1c1c1c;">2,14 €</div><div class="t" style="left:63.5px;top:264.67px;width:300px;text-align:right;font-size:7.0px;transform:scaleX(0.875);transform-origin:100% 0;color:#1c1c1c;">2,14 €</div><div class="t" style="left:-249.3px;top:274.67px;width:300px;text-align:right;font-size:7.0px;transform:scaleX(0.875);transform-origin:100% 0;color:#1c1c1c;">5</div><div class="t" style="left:-221.3px;top:274.67px;width:300px;text-align:right;font-size:7.0px;transform:scaleX(0.875);transform-origin:100% 0;color:#1c1c1c;">20</div><div class="t" style="left:80.8px;top:274.67px;font-size:7.0px;transform:scaleX(0.875);transform-origin:0 0;color:#1c1c1c;">Stk.</div><div class="t" style="left:108.3px;top:274.67px;font-size:7.0px;transform:scaleX(0.875);transform-origin:0 0;color:#1c1c1c;">BE-0002</div><div class="t" style="left:141.3px;top:274.67px;font-size:7.0px;transform:scaleX(0.875);transform-origin:0 0;color:#1c1c1c;">Topfscharnier</div><div class="t" style="left:11.5px;top:274.67px;width:300px;text-align:right;font-size:7.0px;transform:scaleX(0.875);transform-origin:100% 0;color:#1c1c1c;">1,33 €</div><div class="t" style="left:63.5px;top:274.67px;width:300px;text-align:right;font-size:7.0px;transform:scaleX(0.875);transform-origin:100% 0;color:#1c1c1c;">26,60 €</div><div class="t" style="left:-249.3px;top:285.67px;width:300px;text-align:right;font-size:7.0px;transform:scaleX(0.875);transform-origin:100% 0;color:#1c1c1c;">6</div><div class="t" style="left:-221.3px;top:285.67px;width:300px;text-align:right;font-size:7.0px;transform:scaleX(0.875);transform-origin:100% 0;color:#1c1c1c;">20</div><div class="t" style="left:80.8px;top:285.67px;font-size:7.0px;transform:scaleX(0.875);transform-origin:0 0;color:#1c1c1c;">Stk.</div><div class="t" style="left:108.3px;top:285.67px;font-size:7.0px;transform:scaleX(0.875);transform-origin:0 0;color:#1c1c1c;">BE-0003</div><div class="t" style="left:141.3px;top:285.67px;font-size:7.0px;transform:scaleX(0.875);transform-origin:0 0;color:#1c1c1c;">Stangenscharnier</div><div class="t" style="left:11.5px;top:285.67px;width:300px;text-align:right;font-size:7.0px;transform:scaleX(0.875);transform-origin:100% 0;color:#1c1c1c;">1,56 €</div><div class="t" style="left:63.5px;top:285.67px;width:300px;text-align:right;font-size:7.0px;transform:scaleX(0.875);transform-origin:100% 0;color:#1c1c1c;">31,20 €</div><div class="t" style="left:-249.3px;top:296.67px;width:300px;text-align:right;font-size:7.0px;transform:scaleX(0.875);transform-origin:100% 0;color:#1c1c1c;">7</div><div class="t" style="left:-221.3px;top:296.67px;width:300px;text-align:right;font-size:7.0px;transform:scaleX(0.875);transform-origin:100% 0;color:#1c1c1c;">18</div><div class="t" style="left:80.8px;top:296.67px;font-size:7.0px;transform:scaleX(0.875);transform-origin:0 0;color:#1c1c1c;">Stk.</div><div class="t" style="left:108.3px;top:296.67px;font-size:7.0px;transform:scaleX(0.875);transform-origin:0 0;color:#1c1c1c;">BE-0004</div><div class="t" style="left:141.3px;top:296.67px;font-size:7.0px;transform:scaleX(0.875);transform-origin:0 0;color:#1c1c1c;">Möbelschloss</div><div class="t" style="left:11.5px;top:296.67px;width:300px;text-align:right;font-size:7.0px;transform:scaleX(0.875);transform-origin:100% 0;color:#1c1c1c;">4,25 €</div><div class="t" style="left:63.5px;top:296.67px;width:300px;text-align:right;font-size:7.0px;transform:scaleX(0.875);transform-origin:100% 0;color:#1c1c1c;">76,50 €</div><div class="t" style="left:-249.3px;top:308.67px;width:300px;text-align:right;font-size:7.0px;transform:scaleX(0.875);transform-origin:100% 0;color:#1c1c1c;">8</div><div class="t" style="left:-221.3px;top:308.67px;width:300px;text-align:right;font-size:7.0px;transform:scaleX(0.875);transform-origin:100% 0;color:#1c1c1c;">15</div><div class="t" style="left:80.8px;top:308.67px;font-size:7.0px;transform:scaleX(0.875);transform-origin:0 0;color:#1c1c1c;">Stk.</div><div class="t" style="left:108.3px;top:308.67px;font-size:7.0px;transform:scaleX(0.875);transform-origin:0 0;color:#1c1c1c;">BE-0005</div><div class="t" style="left:141.3px;top:308.67px;font-size:7.0px;transform:scaleX(0.875);transform-origin:0 0;color:#1c1c1c;">Riegel</div><div class="t" style="left:11.5px;top:308.67px;width:300px;text-align:right;font-size:7.0px;transform:scaleX(0.875);transform-origin:100% 0;color:#1c1c1c;">5,65 €</div><div class="t" style="left:63.5px;top:308.67px;width:300px;text-align:right;font-size:7.0px;transform:scaleX(0.875);transform-origin:100% 0;color:#1c1c1c;">84,75 €</div><div class="t" style="left:28.3px;top:319.67px;font-size:7.0px;transform:scaleX(0.875);transform-origin:0 0;color:#1c1c1c;">Kleinteile</div><div class="t" style="left:63.5px;top:319.67px;width:300px;text-align:right;font-size:7.0px;transform:scaleX(0.875);transform-origin:100% 0;color:#1c1c1c;font-style:italic;">221,19 €</div><div class="t" style="left:28.3px;top:330.67px;font-size:7.0px;transform:scaleX(0.875);transform-origin:0 0;color:#1c1c1c;">Summe</div><div class="t" style="left:63.5px;top:330.67px;width:300px;text-align:right;font-size:7.0px;transform:scaleX(0.875);transform-origin:100% 0;color:#1c1c1c;">1.519,19 €</div><div class="t" style="left:28.3px;top:352.67px;font-size:7.0px;transform:scaleX(0.875);transform-origin:0 0;color:#1c1c1c;">Mehrwertsteuer 19% auf 1.519,19 € netto</div><div class="t" style="left:63.5px;top:352.67px;width:300px;text-align:right;font-size:7.0px;transform:scaleX(0.875);transform-origin:100% 0;color:#1c1c1c;">288,65 €</div><div class="t" style="left:28.3px;top:363.67px;font-size:7.0px;transform:scaleX(0.875);transform-origin:0 0;color:#1c1c1c;font-weight:bold;transform:scaleX(0.8);">Gesamtbetrag</div><div class="t" style="left:63.5px;top:363.67px;width:300px;text-align:right;font-size:7.0px;transform:scaleX(0.875);transform-origin:100% 0;color:#1c1c1c;font-weight:bold;transform:scaleX(0.8);">1.807,84 €</div><svg style="left:0;top:0" width="1" height="1"><path d="M80.0 154.4L81.0 155.2L82.0 154.4L83.0 155.2L84.0 154.4L85.0 155.2L86.0 154.4L87.0 155.2L88.0 154.4L89.0 155.2L90.0 154.4L91.0 155.2L92.0 154.4L93.0 155.2L94.0 154.4" fill="none" stroke="#e03a48" stroke-width="0.75"/></svg><svg style="left:0;top:0" width="1" height="1"><path d="M108.3 187.4L109.3 188.2L110.3 187.4L111.3 188.2L112.3 187.4L113.3 188.2L114.3 187.4L115.3 188.2L116.3 187.4L117.3 188.2L118.3 187.4L119.3 188.2L120.3 187.4L121.3 188.2L122.3 187.4L123.3 188.2L124.3 187.4L125.3 188.2L126.3 187.4L127.3 188.2L128.3 187.4L129.3 188.2L130.3 187.4L131.3 188.2L132.3 187.4" fill="none" stroke="#e03a48" stroke-width="0.75"/></svg><svg style="left:0;top:0" width="1" height="1"><path d="M141.3 208.4L142.3 209.2L143.3 208.4L144.3 209.2L145.3 208.4L146.3 209.2L147.3 208.4L148.3 209.2L149.3 208.4L150.3 209.2L151.3 208.4L152.3 209.2L153.3 208.4L154.3 209.2L155.3 208.4L156.3 209.2L157.3 208.4L158.3 209.2L159.3 208.4L160.3 209.2L161.3 208.4L162.3 209.2L163.3 208.4L164.3 209.2L165.3 208.4L166.3 209.2L167.3 208.4L168.3 209.2L169.3 208.4L170.3 209.2L171.3 208.4L172.3 209.2L173.3 208.4L174.3 209.2L175.3 208.4L176.3 209.2L177.3 208.4L178.3 209.2L179.3 208.4L180.3 209.2L181.3 208.4L182.3 209.2L183.3 208.4L184.3 209.2L185.3 208.4L186.3 209.2L187.3 208.4L188.3 209.2L189.3 208.4L190.3 209.2L191.3 208.4L192.3 209.2L193.3 208.4" fill="none" stroke="#e03a48" stroke-width="0.75"/></svg><svg style="left:0;top:0" width="1" height="1"><path d="M168.0 219.4L169.0 220.2L170.0 219.4L171.0 220.2L172.0 219.4L173.0 220.2L174.0 219.4L175.0 220.2L176.0 219.4L177.0 220.2L178.0 219.4L179.0 220.2L180.0 219.4" fill="none" stroke="#e03a48" stroke-width="0.75"/></svg><svg style="left:0;top:0" width="1" height="1"><path d="M196.1 219.4L197.1 220.2L198.1 219.4L199.1 220.2L200.1 219.4L201.1 220.2L202.1 219.4L203.1 220.2L204.1 219.4L205.1 220.2L206.1 219.4L207.1 220.2L208.1 219.4L209.1 220.2L210.1 219.4L211.1 220.2L212.1 219.4L213.1 220.2L214.1 219.4L215.1 220.2L216.1 219.4L217.1 220.2L218.1 219.4L219.1 220.2L220.1 219.4L221.1 220.2L222.1 219.4" fill="none" stroke="#e03a48" stroke-width="0.75"/></svg><svg style="left:0;top:0" width="1" height="1"><path d="M141.3 271.4L142.3 272.2L143.3 271.4L144.3 272.2L145.3 271.4L146.3 272.2L147.3 271.4L148.3 272.2L149.3 271.4L150.3 272.2L151.3 271.4L152.3 272.2L153.3 271.4L154.3 272.2L155.3 271.4L156.3 272.2L157.3 271.4L158.3 272.2L159.3 271.4L160.3 272.2L161.3 271.4L162.3 272.2L163.3 271.4L164.3 272.2L165.3 271.4L166.3 272.2L167.3 271.4L168.3 272.2L169.3 271.4L170.3 272.2L171.3 271.4L172.3 272.2L173.3 271.4L174.3 272.2L175.3 271.4L176.3 272.2L177.3 271.4L178.3 272.2L179.3 271.4L180.3 272.2L181.3 271.4L182.3 272.2L183.3 271.4L184.3 272.2L185.3 271.4" fill="none" stroke="#e03a48" stroke-width="0.75"/></svg><svg style="left:0;top:0" width="1" height="1"><path d="M141.3 281.4L142.3 282.2L143.3 281.4L144.3 282.2L145.3 281.4L146.3 282.2L147.3 281.4L148.3 282.2L149.3 281.4L150.3 282.2L151.3 281.4L152.3 282.2L153.3 281.4L154.3 282.2L155.3 281.4L156.3 282.2L157.3 281.4L158.3 282.2L159.3 281.4L160.3 282.2L161.3 281.4L162.3 282.2L163.3 281.4L164.3 282.2L165.3 281.4L166.3 282.2L167.3 281.4L168.3 282.2L169.3 281.4L170.3 282.2L171.3 281.4L172.3 282.2L173.3 281.4L174.3 282.2L175.3 281.4L176.3 282.2L177.3 281.4" fill="none" stroke="#e03a48" stroke-width="0.75"/></svg><svg style="left:0;top:0" width="1" height="1"><path d="M80.8 208.4L81.8 209.2L82.8 208.4L83.8 209.2L84.8 208.4L85.8 209.2L86.8 208.4L87.8 209.2L88.8 208.4L89.8 209.2L90.8 208.4L91.8 209.2" fill="none" stroke="#e03a48" stroke-width="0.75"/></svg><svg style="left:0;top:0" width="1" height="1"><path d="M80.8 219.4L81.8 220.2L82.8 219.4L83.8 220.2L84.8 219.4L85.8 220.2L86.8 219.4L87.8 220.2L88.8 219.4L89.8 220.2L90.8 219.4L91.8 220.2" fill="none" stroke="#e03a48" stroke-width="0.75"/></svg><svg style="left:0;top:0" width="1" height="1"><path d="M80.8 271.4L81.8 272.2L82.8 271.4L83.8 272.2L84.8 271.4L85.8 272.2L86.8 271.4L87.8 272.2L88.8 271.4L89.8 272.2L90.8 271.4L91.8 272.2" fill="none" stroke="#e03a48" stroke-width="0.75"/></svg><svg style="left:0;top:0" width="1" height="1"><path d="M80.8 281.4L81.8 282.2L82.8 281.4L83.8 282.2L84.8 281.4L85.8 282.2L86.8 281.4L87.8 282.2L88.8 281.4L89.8 282.2L90.8 281.4L91.8 282.2" fill="none" stroke="#e03a48" stroke-width="0.75"/></svg><svg style="left:0;top:0" width="1" height="1"><path d="M80.8 292.4L81.8 293.2L82.8 292.4L83.8 293.2L84.8 292.4L85.8 293.2L86.8 292.4L87.8 293.2L88.8 292.4L89.8 293.2L90.8 292.4L91.8 293.2" fill="none" stroke="#e03a48" stroke-width="0.75"/></svg><svg style="left:0;top:0" width="1" height="1"><path d="M80.8 303.4L81.8 304.2L82.8 303.4L83.8 304.2L84.8 303.4L85.8 304.2L86.8 303.4L87.8 304.2L88.8 303.4L89.8 304.2L90.8 303.4L91.8 304.2" fill="none" stroke="#e03a48" stroke-width="0.75"/></svg><svg style="left:0;top:0" width="1" height="1"><path d="M80.8 315.4L81.8 316.2L82.8 315.4L83.8 316.2L84.8 315.4L85.8 316.2L86.8 315.4L87.8 316.2L88.8 315.4L89.8 316.2L90.8 315.4L91.8 316.2" fill="none" stroke="#e03a48" stroke-width="0.75"/></svg><svg style="left:351px;top:134.5px" width="7" height="11" viewBox="0 0 7 11"><path d="M0.5 0.5V9L2.8 7L4.5 10.3L5.8 9.6L4.2 6.5H7Z" fill="#fff" stroke="#555" stroke-width="0.8"/></svg><div style="left:723px;top:98px;width:9px;height:285px;background:#f0f0f0;"></div><div style="left:722.5px;top:98.5px;width:8.5px;height:2px;background:#777;"></div><svg style="left:724.5px;top:104.5px" width="5" height="3" viewBox="0 0 5 3"><path d="M0 3L2.5 0.5L5 3" fill="none" stroke="#555" stroke-width="0.9"/></svg><div style="left:723px;top:166px;width:8px;height:78px;background:#cdcdcd;"></div><svg style="left:724.5px;top:377.5px" width="5" height="3" viewBox="0 0 5 3"><path d="M0 0L2.5 2.5L5 0" fill="none" stroke="#555" stroke-width="0.9"/></svg><div style="left:732px;top:80px;width:1px;height:325px;background:#d6d6d6;"></div><div style="left:732px;top:223px;width:3px;height:40px;background:#555;"></div><div style="left:735px;top:80px;width:22px;height:324px;background:#f3f3f3;border-left:1px solid #dedede;"></div><div class="t" style="left:736.0px;top:87.81px;width:20px;text-align:center;font-size:8.5px;color:#555;">⋮</div><div style="left:737.5px;top:104.5px;width:17px;height:17px;background:#f7f7f7;border:1px solid #dadada;border-radius:1px;"></div><svg style="left:741px;top:108px" width="10" height="10" viewBox="0 0 10 10"><rect x="0.5" y="0.5" width="9" height="9" fill="#fff" stroke="#444"/><rect x="0.5" y="0.5" width="9" height="1.6" fill="#333"/><path d="M2.5 5H7.5M2.5 7H6" stroke="#4a9fe0" stroke-width="0.8"/></svg><svg style="left:740px;top:127px" width="12" height="12" viewBox="0 0 12 12"><text x="0" y="10" font-size="11" fill="#333" font-family="Liberation Sans">A</text><path d="M6 10L11 4" stroke="#3a9ae0" stroke-width="1.6"/></svg><svg style="left:740px;top:146px" width="12" height="11" viewBox="0 0 12 11"><path d="M0.5 1V10.5H10V3H5L4 1Z" fill="#f6d28b" stroke="#e8b35b" stroke-width="0.9"/><rect x="4" y="4.5" width="7.5" height="6" fill="#fff" stroke="#3a8ee0" stroke-width="0.9"/><path d="M4.5 10L7 7L9 9L11 7.5V10Z" fill="#3a8ee0"/></svg><svg style="left:740.5px;top:164.5px" width="11" height="11" viewBox="0 0 11 11"><circle cx="5.5" cy="5.5" r="4.8" fill="#fff" stroke="#555" stroke-width="1"/><path d="M3.5 7.5L4.8 4.8L7.5 3.5L6.2 6.2Z" fill="#3a9ae0"/></svg><div class="t" style="left:734.5px;top:182.24px;width:20px;text-align:center;font-size:13px;color:#3a8ee0;font-style:italic;">ƒ</div><div class="t" style="left:739.0px;top:186.81px;width:20px;text-align:center;font-size:8.5px;color:#3a8ee0;font-style:italic;">x</div><div style="left:10px;top:383px;width:713px;height:8.5px;background:#f0f0f0;"></div><svg style="left:13px;top:385px" width="3" height="5" viewBox="0 0 3 5"><path d="M2.5 0L0.5 2.5L2.5 5" fill="none" stroke="#333" stroke-width="0.9"/></svg><div style="left:19px;top:383.5px;width:324px;height:8px;background:#cdcdcd;"></div><svg style="left:713px;top:385.5px" width="3" height="5" viewBox="0 0 3 5"><path d="M0.5 0L2.5 2.5L0.5 5" fill="none" stroke="#333" stroke-width="0.9"/></svg><div style="left:720px;top:384.5px;width:2px;height:8px;background:#444;"></div><div style="left:10px;top:391.5px;width:722px;height:13px;background:#efefef;"></div><svg style="left:16.5px;top:394.5px" width="6" height="7" viewBox="0 0 6 7"><path d="M0.6 0V7" stroke="#c4c4c4" stroke-width="1.1"/><path d="M5.5 0V7L1.5 3.5Z" fill="#c4c4c4"/></svg><svg style="left:29px;top:394.5px" width="5" height="7" viewBox="0 0 5 7"><path d="M4.5 0V7L0.5 3.5Z" fill="#c4c4c4"/></svg><svg style="left:40.5px;top:394.5px" width="5" height="7" viewBox="0 0 5 7"><path d="M0.5 0V7L4.5 3.5Z" fill="#c4c4c4"/></svg><svg style="left:51.5px;top:394.5px" width="6" height="7" viewBox="0 0 6 7"><path d="M5.4 0V7" stroke="#c4c4c4" stroke-width="1.1"/><path d="M0.5 0V7L4.5 3.5Z" fill="#c4c4c4"/></svg><div class="t" style="left:60.599999999999994px;top:392.24px;width:20px;text-align:center;font-size:13px;color:#111;font-weight:bold;">+</div><div style="left:80px;top:392.5px;width:38px;height:11.5px;background:#fff;"></div><div style="left:80px;top:402.3px;width:38px;height:2px;background:#505050;"></div><div class="t" style="left:87.5px;top:394.89px;font-size:6.2px;color:#333;">Tabelle1</div><div style="left:10px;top:404px;width:747px;height:1px;background:#d2d2d2;"></div><div style="left:10px;top:405px;width:747px;height:13px;background:#efefef;"></div><div class="t" style="left:16px;top:409.06px;font-size:6.9px;transform:scaleX(0.9);transform-origin:0 0;color:#222;">Tabelle 1 von 1</div><div style="left:112.5px;top:406px;width:1px;height:11px;background:#cfcfcf;"></div><div style="left:203px;top:406px;width:1px;height:11px;background:#cfcfcf;"></div><div style="left:316px;top:406px;width:1px;height:11px;background:#cfcfcf;"></div><div style="left:442px;top:406px;width:1px;height:11px;background:#cfcfcf;"></div><div style="left:479px;top:406px;width:1px;height:11px;background:#cfcfcf;"></div><div style="left:495.5px;top:406px;width:1px;height:11px;background:#cfcfcf;"></div><div style="left:513px;top:406px;width:1px;height:11px;background:#cfcfcf;"></div><div style="left:528.5px;top:406px;width:1px;height:11px;background:#cfcfcf;"></div><div style="left:653px;top:406px;width:1px;height:11px;background:#cfcfcf;"></div><div style="left:731px;top:406px;width:1px;height:11px;background:#cfcfcf;"></div><div class="t" style="left:208.8px;top:409.06px;font-size:6.9px;transform:scaleX(0.9);transform-origin:0 0;color:#222;">PageStyle_Tabelle1</div><div class="t" style="left:347.5px;top:409.06px;font-size:6.9px;transform:scaleX(0.9);transform-origin:0 0;color:#222;">Deutsch (Deutschland)</div><svg style="left:483px;top:408.5px" width="11" height="6" viewBox="0 0 11 6"><rect x="0.5" y="1.5" width="5" height="3" fill="none" stroke="#666" stroke-width="0.8"/><path d="M8 0.5V5.5M7 0.5H9M7 5.5H9" stroke="#555" stroke-width="0.8"/></svg><svg style="left:502px;top:408px" width="6" height="6" viewBox="0 0 6 6"><rect x="0.5" y="0.5" width="5" height="5" fill="none" stroke="#666" stroke-width="0.8"/><rect x="1.5" y="0.5" width="3" height="2" fill="#666"/></svg><div class="t" style="left:559.5px;top:409.06px;font-size:6.9px;transform:scaleX(0.9);transform-origin:0 0;color:#222;">Mittelwert: ; Summe: 0</div><div style="left:657.5px;top:411px;width:4.5px;height:1px;background:#555;"></div><div style="left:666px;top:411px;width:53px;height:1px;background:#999;"></div><div style="left:690px;top:408.5px;width:2.5px;height:5.5px;background:#eee;border:1px solid #666;"></div><svg style="left:722px;top:408.5px" width="5" height="5" viewBox="0 0 5 5"><path d="M2.5 0V5M0 2.5H5" stroke="#555" stroke-width="0.9"/></svg><div class="t" style="left:736px;top:409.06px;font-size:6.9px;transform:scaleX(0.82);transform-origin:0 0;color:#222;">100 %</div></body></html>
